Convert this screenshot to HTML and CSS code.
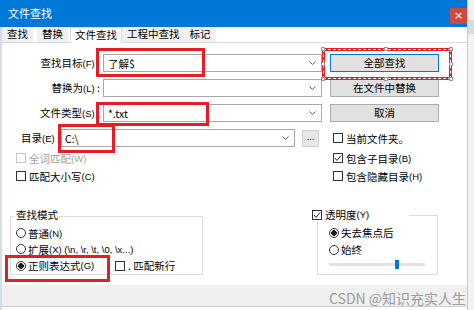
FILE: index.html
```html
<!DOCTYPE html>
<html lang="zh-CN">
<head>
<meta charset="utf-8">
<title>文件查找</title>
<link rel="stylesheet" href="styles.css">
</head>
<body>
<div class="window">
  <div class="frame">
    <div class="titlebar">
      <span class="title">文件查找</span>
      <span class="close">×</span>
    </div>
    <div class="inner">
      <div class="tabs">
        <span class="tab t1">查找</span>
        <span class="tab t2">替换</span>
        <span class="tab active">文件查找</span>
        <span class="tab t4">工程中查找</span>
        <span class="tab t5">标记</span>
      </div>

      <div class="form">
        <div class="row">
          <span class="label">查找目标<span class="k">(F)</span> :</span>
          <div class="combo"><span class="val">了解$</span><svg class="chev" width="7" height="4" viewBox="0 0 7 4"><polyline points="0.5,0.5 3.5,3.5 6.5,0.5" fill="none" stroke="#606060" stroke-width="1"/></svg></div>
          <span class="btn default">全部查找</span>
        </div>
        <div class="row">
          <span class="label">替换为<span class="k">(L)</span> :</span>
          <div class="combo"><span class="val"></span><svg class="chev" width="7" height="4" viewBox="0 0 7 4"><polyline points="0.5,0.5 3.5,3.5 6.5,0.5" fill="none" stroke="#606060" stroke-width="1"/></svg></div>
          <span class="btn">在文件中替换</span>
        </div>
        <div class="row">
          <span class="label">文件类型<span class="k">(S)</span> :</span>
          <div class="combo"><span class="val">*.txt</span><svg class="chev" width="7" height="4" viewBox="0 0 7 4"><polyline points="0.5,0.5 3.5,3.5 6.5,0.5" fill="none" stroke="#606060" stroke-width="1"/></svg></div>
          <span class="btn">取消</span>
        </div>
        <div class="row">
          <span class="label short">目录<span class="k">(E)</span> :</span>
          <div class="combo dir"><span class="val">C:\</span><svg class="chev" width="7" height="4" viewBox="0 0 7 4"><polyline points="0.5,0.5 3.5,3.5 6.5,0.5" fill="none" stroke="#606060" stroke-width="1"/></svg></div>
          <span class="dots">...</span>
          <span class="check cur"><span class="box"></span>当前文件夹。</span>
        </div>
      </div>

      <div class="checks">
        <div class="col-left">
          <span class="check disabled"><span class="box"></span>全词匹配<span class="k">(W)</span></span>
          <span class="check"><span class="box"></span>匹配大小写<span class="k">(C)</span></span>
        </div>
        <div class="col-right">
          <span class="check"><span class="box"><svg width="8" height="8" viewBox="0 0 8 8"><polyline points="1,4 3,6.5 7,1.5" fill="none" stroke="#222" stroke-width="1"/></svg></span>包含子目录<span class="k">(B)</span></span>
          <span class="check"><span class="box"></span>包含隐藏目录<span class="k">(H)</span></span>
        </div>
      </div>

      <div class="groups">
        <div class="group gleft">
          <span class="legend">查找模式</span>
          <span class="opt"><span class="radio"></span>普通<span class="k">(N)</span></span>
          <span class="opt"><span class="radio"></span>扩展<span class="k">(X) (\n, \r, \t, \0, \x...)</span></span>
          <div class="optrow">
            <span class="opt regex"><span class="radio on"></span>正则表达式<span class="k">(G)</span></span>
            <span class="opt"><span class="box"></span>. 匹配新行</span>
          </div>
        </div>
        <div class="group gright">
          <span class="legend wide"><span class="box"><svg width="8" height="8" viewBox="0 0 8 8"><polyline points="1,4 3,6.5 7,1.5" fill="none" stroke="#222" stroke-width="1"/></svg></span>透明度<span class="k">(Y)</span></span>
          <span class="opt"><span class="radio on"></span>失去焦点后</span>
          <span class="opt"><span class="radio"></span>始终</span>
          <div class="slider"><span class="thumb"></span></div>
        </div>
      </div>

      <div class="footer"></div>
    </div>
  </div>
  <div class="strip"><span class="sthumb"></span></div>

  <div class="mark m1"></div>
  <div class="mark m2"></div>
  <div class="mark m3"></div>
  <div class="mark m4"></div>
  <div class="mark sel">
    <span class="h hl1"></span><span class="h hl2"></span><span class="h hl3"></span>
    <span class="h hm1"></span><span class="h hm2"></span>
    <span class="h hb1"></span><span class="h hb2"></span><span class="h hb3"></span>
  </div>
  <div class="watermark">CSDN @知识充实人生</div>
</div>
</body>
</html>
```

FILE: styles.css
```css
* { box-sizing: border-box; }
html, body { margin: 0; padding: 0; background: #fff; }
body {
  font-family: "Noto Sans CJK SC", "Noto Sans", sans-serif;
  font-size: 10.5px;
  color: #000;
}
.window {
  position: relative;
  width: 474px;
  height: 310px;
  overflow: hidden;
  display: flex;
  background: #fff;
}
.frame {
  width: 467px;
  display: flex;
  flex-direction: column;
}
.strip {
  width: 7px;
  border-left: 1px solid #c9c9c9;
  background: #f2f2f2;
  display: flex;
  flex-direction: column;
}
.sthumb {
  margin-top: 20px;
  height: 14px;
  background: #dcdcdc;
}

/* title bar */
.titlebar {
  height: 27px;
  background: #0078d7;
  display: flex;
  align-items: flex-start;
  color: #fff;
}
.title {
  padding-left: 8px;
  line-height: 27px;
  font-size: 11px;
}
.close {
  margin-left: auto;
  margin-top: 8px;
  width: 17px;
  height: 16px;
  background: #cc4a42;
  color: #fff;
  font-size: 11px;
  line-height: 15px;
  text-align: center;
  font-family: "DejaVu Sans", sans-serif;
}

.inner {
  flex: 1;
  border-left: 2px solid #d5dde8;
  display: flex;
  flex-direction: column;
}

/* tabs */
.tabs {
  height: 16px;
  border-bottom: 1px solid #dadada;
  display: flex;
  align-items: flex-end;
}
.tab {
  height: 15px;
  line-height: 14px;
  padding: 0 5px;
  background: #f0f0f0;
  white-space: nowrap;
}
.t1 { margin-right: 4px; }
.t2 { margin-right: 2px; }
.tab.active {
  background: #fff;
  height: 16px;
  margin-bottom: -1px;
  padding: 0 4px;
  border: 1px solid #dadada;
  border-bottom: none;
  line-height: 14px;
}

/* form rows */
.form {
  padding-top: 11px;
  display: flex;
  flex-direction: column;
  gap: 7px;
}
.row {
  display: flex;
  align-items: center;
  height: 18px;
}
.label {
  width: 98px;
  text-align: right;
  white-space: nowrap;
  line-height: 18px;
}
.label.short { width: 58px; }
.k {
  font-family: "Liberation Sans", "Noto Sans", sans-serif;
  font-size: 9.5px;
}
.combo {
  margin-left: 3px;
  width: 219px;
  height: 18px;
  border: 1px solid #a8a8a8;
  background: #fff;
  display: flex;
  align-items: center;
  padding-left: 4px;
}
.combo.dir {
  margin-left: 1px;
  width: 234px;
  padding-left: 3px;
}
.val { white-space: nowrap; }
.chev { margin-left: auto; margin-right: 5px; }
.btn {
  margin-left: 8px;
  width: 109px;
  height: 18px;
  background: #e1e1e1;
  border: 1px solid #adadad;
  text-align: center;
  line-height: 16px;
}
.btn.default { border-color: #0078d7; }
.dots {
  margin-left: 7px;
  width: 17px;
  height: 17px;
  background: #e8e8e8;
  border: 1px solid #d0d0d0;
  text-align: center;
  line-height: 12px;
  font-size: 9px;
  color: #333;
}
.check {
  display: flex;
  align-items: center;
  height: 18px;
  white-space: nowrap;
}
.check.cur { margin-left: 14px; }
.box {
  width: 10px;
  height: 10px;
  border: 1px solid #333;
  background: #fff;
  margin-right: 3px;
  display: flex;
  align-items: center;
  justify-content: center;
  flex: none;
}
.check.disabled { color: #a0a0a0; }
.check.disabled .box { border-color: #c4c4c4; }

/* checkbox block */
.checks {
  margin-top: 2px;
  display: flex;
}
.col-left {
  width: 331px;
  padding-left: 14px;
  display: flex;
  flex-direction: column;
}
.col-right {
  display: flex;
  flex-direction: column;
}

/* group boxes */
.groups {
  margin-top: 30px;
  display: flex;
  align-items: flex-start;
}
.group {
  position: relative;
  border: 1px solid #dcdcdc;
  display: flex;
  flex-direction: column;
}
.gleft {
  margin-left: 8px;
  margin-top: 1px;
  width: 193px;
  height: 59px;
  padding: 8px 0 0 5px;
}
.gright {
  margin-left: 114px;
  width: 121px;
  height: 60px;
  padding: 8px 0 0 11px;
}
.legend {
  position: absolute;
  left: 4px;
  top: -9px;
  line-height: 14px;
  padding: 0 1px;
  background: #fff;
  white-space: nowrap;
  display: flex;
  align-items: center;
}
.legend.wide {
  left: -6px;
  top: -8px;
  width: 97px;
  padding: 0;
}
.opt {
  display: flex;
  align-items: center;
  height: 17px;
  white-space: nowrap;
}
.optrow { display: flex; }
.opt.regex { width: 99px; }
.radio {
  width: 10px;
  height: 10px;
  border: 1px solid #333;
  border-radius: 50%;
  background: #fff;
  margin-right: 2px;
  flex: none;
}
.radio.on {
  background: radial-gradient(circle, #1a1a1a 0 2.6px, #fff 3px);
}
.slider {
  position: relative;
  margin-top: 5px;
  width: 96px;
  height: 3px;
  background: #e2e2e2;
}
.thumb {
  position: absolute;
  left: 66px;
  top: -3px;
  width: 4px;
  height: 9px;
  background: #0078d7;
}

.footer {
  margin-top: 10px;
  height: 22px;
  background: #f0f0f0;
  border-bottom: 1px solid #cccccc;
}

/* annotation overlays */
.mark {
  position: absolute;
  border: 3px solid #e31e24;
}
.m1 { left: 96px; top: 48px; width: 109px; height: 29px; }
.m2 { left: 96px; top: 102px; width: 113px; height: 24px; }
.m3 { left: 58px; top: 124px; width: 57px; height: 29px; }
.m4 { left: 5px; top: 255px; width: 105px; height: 27px; }
.sel { left: 322px; top: 48px; width: 130px; height: 32px; }
.sel::after {
  content: "";
  position: absolute;
  inset: -2px;
  border: 1px dashed #ffffff;
}
.h {
  position: absolute;
  width: 4px;
  height: 4px;
  background: #fff;
  border: 1px solid #999;
  z-index: 1;
}
.hl1 { left: -4px; top: -4px; }
.hl2 { left: 59px; top: -4px; }
.hl3 { right: -4px; top: -4px; }
.hm1 { left: -4px; top: 11px; }
.hm2 { right: -4px; top: 11px; }
.hb1 { left: -4px; bottom: -4px; }
.hb2 { left: 59px; bottom: -4px; }
.hb3 { right: -4px; bottom: -4px; }

.watermark {
  position: absolute;
  left: 329px;
  top: 289px;
  font-size: 14px;
  line-height: 18px;
  color: #9c9c9c;
  white-space: nowrap;
}
```
